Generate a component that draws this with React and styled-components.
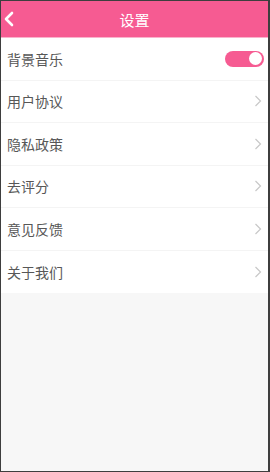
import styled, { createGlobalStyle } from 'styled-components';

const Global = createGlobalStyle`
    html, body {
        margin: 0;
        padding: 0;
        background: #f7f7f7;
    }
    body {
        font-family: "Noto Sans CJK SC", "Noto Sans", sans-serif;
    }
`

const Tela = styled.div`
    box-sizing: border-box;
    width: 270px;
    height: 472px;
    border: 1px solid #3e3e3e;
    border-right-width: 2px;
    background: #f7f7f7;
    display: flex;
    flex-direction: column;
    overflow: hidden;
`

const Cabecalho = styled.header`
    position: relative;
    height: 36px;
    flex-shrink: 0;
    background: #f65b92;
    border-bottom: 1px solid #f9b3cc;
    display: flex;
    align-items: center;
    justify-content: center;
    color: white;
    font-size: 15px;
`

const Voltar = styled.button`
    position: absolute;
    left: 2px;
    top: 50%;
    transform: translateY(-50%);
    display: flex;
    padding: 0;
    border: none;
    background: none;
`

const Lista = styled.ul`
    list-style: none;
    margin: 0;
    padding: 0;
    background: white;
`

const Linha = styled.li`
    box-sizing: border-box;
    height: 42.5px;
    display: flex;
    align-items: center;
    justify-content: space-between;
    padding: 0 6px;
    font-size: 14px;
    color: #575757;
    border-bottom: ${props => props.ultima ? 'none' : '1px solid #f4f4f4'};
`

const Chave = styled.span`
    width: 39px;
    height: 16px;
    margin-right: -2px;
    border-radius: 8px;
    background: #f65b92;
    display: flex;
    align-items: center;
    justify-content: flex-end;
    padding-right: 2px;
    box-sizing: border-box;

    &::after {
        content: '';
        width: 13px;
        height: 13px;
        border-radius: 50%;
        background: white;
    }
`

const itens = ['用户协议', '隐私政策', '去评分', '意见反馈', '关于我们']

function Seta() {
    return (
        <svg width="8" height="12" viewBox="0 0 8 12">
            <path d="M1.5 1 L6.5 6 L1.5 11" fill="none" stroke="#c8c8c8" strokeWidth="1.2" />
        </svg>
    )
}

export default function App() {
    return (
        <Tela>
            <Global />
            <Cabecalho>
                <Voltar>
                    <svg width="12" height="16" viewBox="0 0 12 16">
                        <path d="M9 2 L3 8 L9 14" fill="none" stroke="white" strokeWidth="2.6" strokeLinecap="round" strokeLinejoin="round" />
                    </svg>
                </Voltar>
                设置
            </Cabecalho>
            <Lista>
                <Linha>
                    背景音乐
                    <Chave />
                </Linha>
                {itens.map((item, i) => (
                    <Linha key={item} ultima={i === itens.length - 1}>
                        {item}
                        <Seta />
                    </Linha>
                ))}
            </Lista>
        </Tela>
    )
}
